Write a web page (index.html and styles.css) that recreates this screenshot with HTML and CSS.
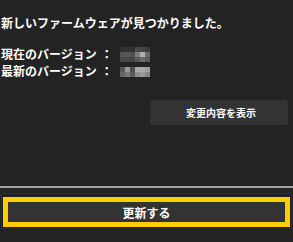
FILE: index.html
```html
<!DOCTYPE html>
<html lang="ja">
<head>
<meta charset="utf-8">
<link rel="stylesheet" href="styles.css">
</head>
<body>
<div class="page">
  <div class="content">
    <p class="title">新しいファームウェアが見つかりました。</p>
    <div class="versions">
      <div class="vrow"><span class="vlabel">現在のバージョン</span><span class="colon">：</span>
        <span class="mosaic m3">
          <i style="background:#2e2e2e"></i><i style="background:#333"></i><i style="background:#2f2f2f"></i><i style="background:#4c4c4c"></i><i style="background:#454545"></i><i style="background:#3a3a3a"></i>
          <i style="background:#555"></i><i style="background:#575757"></i><i style="background:#4f4f4f"></i><i style="background:#7e7e7e"></i><i style="background:#b0b0b0"></i><i style="background:#6a6a6a"></i>
          <i style="background:#474747"></i><i style="background:#484848"></i><i style="background:#454545"></i><i style="background:#5a5a5a"></i><i style="background:#6a6a6a"></i><i style="background:#5c5c5c"></i>
        </span>
      </div>
      <div class="vrow"><span class="vlabel">最新のバージョン</span><span class="colon">：</span>
        <span class="mosaic m2">
          <i style="background:#555"></i><i style="background:#9a9a9a"></i><i style="background:#505050"></i><i style="background:#a8a8a8"></i><i style="background:#aaa"></i><i style="background:#9e9e9e"></i>
          <i style="background:#666"></i><i style="background:#7a7a7a"></i><i style="background:#5a5a5a"></i><i style="background:#8c8c8c"></i><i style="background:#9a9a9a"></i><i style="background:#888"></i>
        </span>
      </div>
    </div>
    <div class="actions">
      <button class="btn-changes">変更内容を表示</button>
    </div>
  </div>
  <div class="footer">
    <div class="footer-box">
      <button class="btn-update">更新する</button>
    </div>
  </div>
</div>
</body>
</html>
```
FILE: styles.css
```css
* { box-sizing: border-box; }
html, body {
  margin: 0;
  padding: 0;
  background: #232323;
}
body {
  width: 293px;
  height: 242px;
  overflow: hidden;
  font-family: "Noto Sans CJK JP", "Noto Sans", sans-serif;
  font-weight: 700;
  color: #fff;
}
.page {
  display: flex;
  flex-direction: column;
  height: 242px;
}
.content {
  flex: 1;
  padding-left: 1px;
}
.title {
  margin: 14px 0 0;
  font-size: 12px;
  line-height: 17px;
}
.versions {
  margin-top: 14px;
  font-size: 12px;
  line-height: 17px;
}
.vrow {
  display: flex;
  align-items: center;
  height: 17px;
}
.colon {
  margin-left: 4px;
  width: 12px;
  text-align: center;
}
.mosaic {
  display: grid;
  grid-template-columns: repeat(6, 5px);
  grid-auto-rows: 5px;
  margin-left: 7px;
}
.mosaic i { display: block; }
.m3 { margin-top: 1px; }
.m2 { margin-top: 2px; }
.actions {
  display: flex;
  justify-content: flex-end;
  margin-top: 21px;
  padding-right: 5px;
}
.btn-changes {
  width: 138px;
  height: 25px;
  background: #333;
  border: none;
  border-radius: 3px;
  color: #fff;
  font-family: inherit;
  font-weight: 700;
  font-size: 10px;
  padding: 0 0 0 4px;
}
.footer {
  border-top: 2px solid #a0a0a0;
  padding: 5px 1px 12px;
  height: 56px;
}
.footer-box {
  border: 1px solid #2e2e2e;
  background: #1f1f1f;
  padding: 3px 1px 1px 1px;
}
.btn-update {
  display: block;
  width: 100%;
  height: 30px;
  border: 5px solid #ffcc00;
  background: #333;
  color: #fff;
  font-family: inherit;
  font-weight: 700;
  font-size: 12px;
  padding: 0;
}
```
